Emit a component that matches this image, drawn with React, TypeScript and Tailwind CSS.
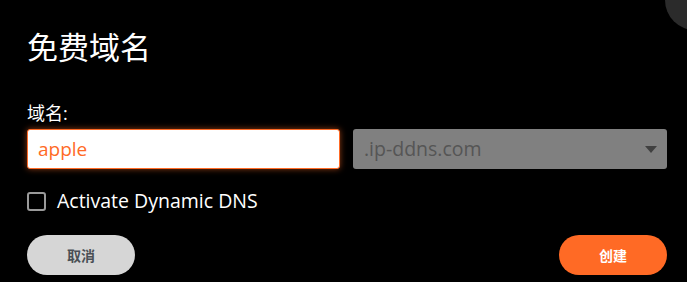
import type { ReactElement } from "react";

const sans = "font-['Open_Sans','Noto_Sans_CJK_SC',sans-serif]";

export default function App(): ReactElement {
  return (
    <div className={`relative h-[282px] w-[687px] overflow-hidden bg-black ${sans}`}>
      <div className="absolute -right-[38px] -top-[30px] h-[60px] w-[60px] rounded-full bg-[#2b2b2b]" />

      <div className="pl-[27px] pr-[20px] pt-[26px]">
        <h1 className="font-['Noto_Sans_CJK_SC',sans-serif] text-[31px] leading-[40px] text-white">免费域名</h1>

        <p className="mt-[36px] text-[18px] leading-[22px] text-white">域名:</p>

        <div className="mt-[5px] flex gap-[13px]">
          <div className="flex h-[40px] w-[313px] shrink-0 items-center rounded-[3px] border border-[#ff6a25] bg-white px-[10px] shadow-[0_0_6px_rgba(255,106,37,0.55)]">
            <span className="text-[19px] text-[#ff6a25]">apple</span>
          </div>
          <div className="flex h-[40px] w-[314px] shrink-0 items-center justify-between rounded-[3px] bg-[#808080] pl-[11px] pr-[10px]">
            <span className="text-[19.5px] text-[#555555]">.ip-ddns.com</span>
            <svg width="12" height="7" viewBox="0 0 12 7">
              <path d="M0 0h12L6 7z" fill="#404040" />
            </svg>
          </div>
        </div>

        <label className="mt-[21px] flex items-center gap-[11px]">
          <span className="h-[19px] w-[19px] rounded-[3px] border-2 border-[#9a9a9a]" />
          <span className="text-[19.5px] leading-[22px] text-white">Activate Dynamic DNS</span>
        </label>

        <div className="mt-[23px] flex justify-between">
          <button
            className="flex h-[40px] w-[108px] items-center justify-center rounded-full bg-[#d6d6d6] text-[14px] font-bold text-[#4a4f55]"
            type="button"
          >
            取消
          </button>
          <button
            className="flex h-[40px] w-[108px] items-center justify-center rounded-full bg-[#ff6a25] text-[14px] font-bold text-white"
            type="button"
          >
            创建
          </button>
        </div>
      </div>
    </div>
  );
}
